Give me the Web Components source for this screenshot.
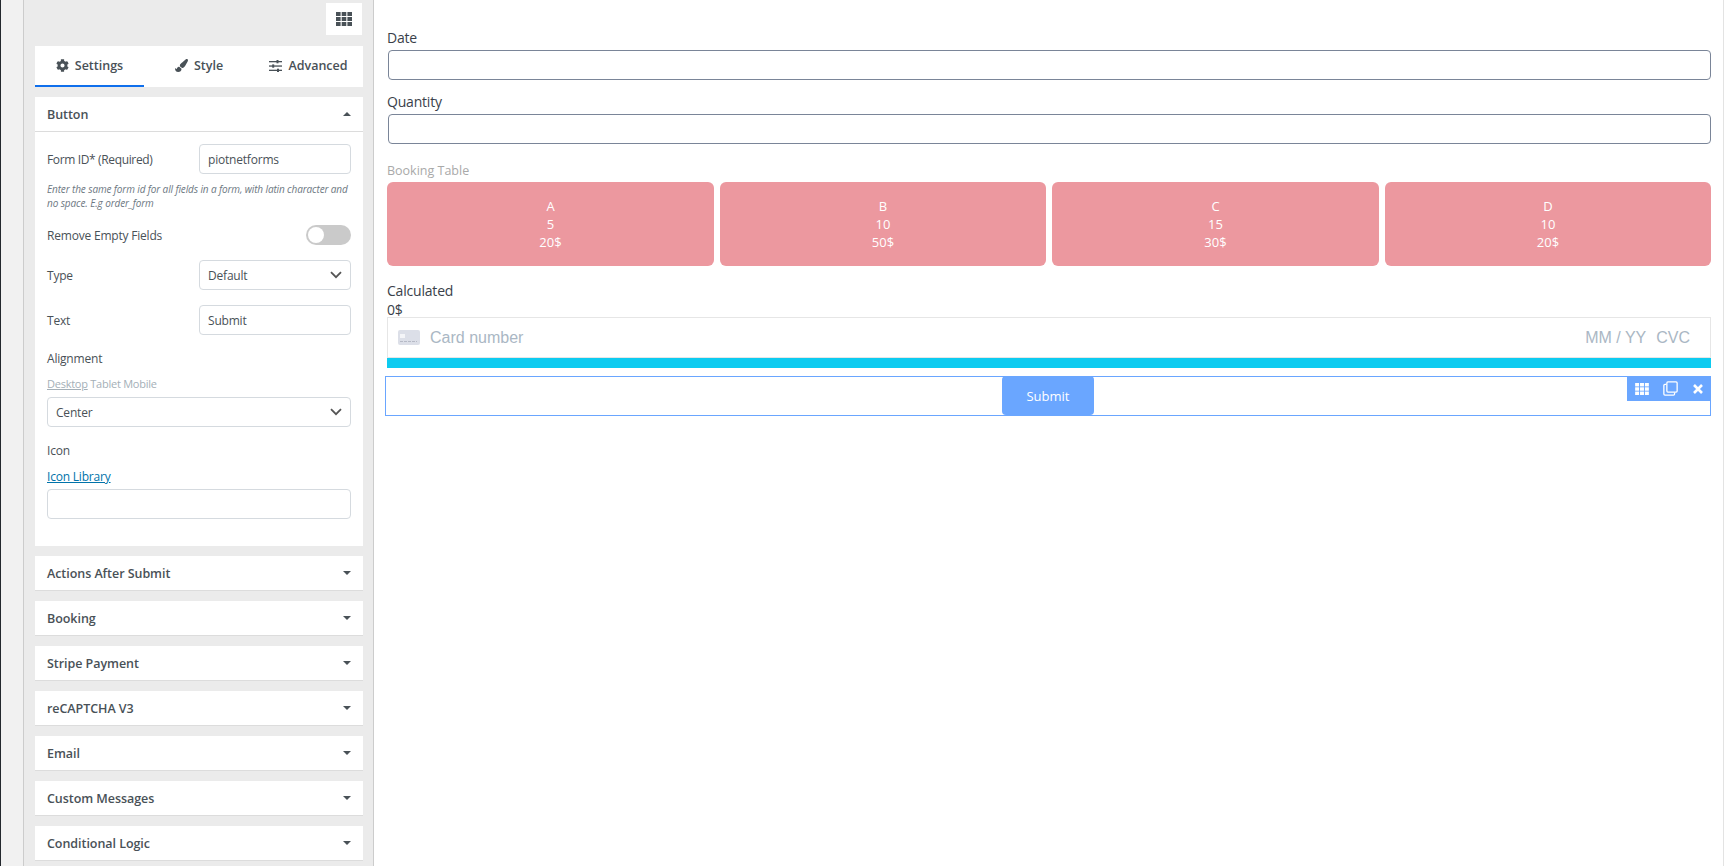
<!DOCTYPE html>
<html lang="en">
<head>
<meta charset="UTF-8">
<title>Piotnet Forms editor</title>
<style>
  html, body { margin: 0; height: 100%; overflow: hidden; }
  body { font-family: "Open Sans", "Liberation Sans", sans-serif; color: #495157; background: #fff; }
  .help { margin: 8px 0 0; font: italic 10px/14px "Open Sans", sans-serif; letter-spacing: -.12px; color: #6d7882; }
</style>
</head>
<body>
<editor-page>
  <editor-sidebar slot="side">
    <editor-tabs></editor-tabs>
    <editor-section title="Button" open>
      <editor-field label="Form ID* (Required)" value="piotnetforms" style="--label-spacing:-.36px"></editor-field>
      <p class="help">Enter the same form id for all fields in a form, with latin character and no space. E.g order_form</p>
      <editor-switch label="Remove Empty Fields"></editor-switch>
      <editor-field label="Type" value="Default" select style="margin-top:15px"></editor-field>
      <editor-field label="Text" value="Submit" style="margin-top:15px"></editor-field>
      <editor-wide label="Alignment" value="Center" select></editor-wide>
      <editor-wide label="Icon" link="Icon Library"></editor-wide>
    </editor-section>
    <editor-section title="Actions After Submit"></editor-section>
    <editor-section title="Booking"></editor-section>
    <editor-section title="Stripe Payment"></editor-section>
    <editor-section title="reCAPTCHA V3"></editor-section>
    <editor-section title="Email"></editor-section>
    <editor-section title="Custom Messages"></editor-section>
    <editor-section title="Conditional Logic"></editor-section>
  </editor-sidebar>
  <form-canvas slot="main">
    <form-input label="Date"></form-input>
    <form-input label="Quantity"></form-input>
    <booking-table>
      <booking-card>A<br>5<br>20$</booking-card>
      <booking-card>B<br>10<br>50$</booking-card>
      <booking-card>C<br>15<br>30$</booking-card>
      <booking-card>D<br>10<br>20$</booking-card>
    </booking-table>
    <calc-field></calc-field>
    <stripe-card></stripe-card>
    <submit-row></submit-row>
  </form-canvas>
</editor-page>

<script>
  const TH = `<svg viewBox="0 0 16 14" width="16" height="14" fill="currentColor">
    <rect x="0" y="0" width="4.6" height="4"/><rect x="5.7" y="0" width="4.6" height="4"/><rect x="11.4" y="0" width="4.6" height="4"/>
    <rect x="0" y="5" width="4.6" height="4"/><rect x="5.7" y="5" width="4.6" height="4"/><rect x="11.4" y="5" width="4.6" height="4"/>
    <rect x="0" y="10" width="4.6" height="4"/><rect x="5.7" y="10" width="4.6" height="4"/><rect x="11.4" y="10" width="4.6" height="4"/>
  </svg>`;
  const COG = `<svg viewBox="0 0 512 512" width="13" height="13" fill="currentColor"><path d="M487.4 315.7l-42.6-24.6c4.3-23.2 4.3-47 0-70.2l42.6-24.6c4.9-2.8 7.1-8.6 5.5-14-11.1-35.6-30-67.8-54.7-94.6-3.8-4.1-10-5.1-14.8-2.3L380.8 110c-17.9-15.4-38.5-27.3-60.8-35.1V25.8c0-5.6-3.9-10.5-9.4-11.7-36.7-8.2-74.3-7.8-109.2 0-5.5 1.2-9.4 6.1-9.4 11.7V75c-22.2 7.9-42.8 19.8-60.8 35.1L88.7 85.5c-4.9-2.8-11-1.9-14.8 2.3-24.7 26.7-43.6 58.9-54.7 94.6-1.7 5.4.6 11.2 5.5 14L67.3 221c-4.3 23.2-4.3 47 0 70.2l-42.6 24.6c-4.9 2.8-7.1 8.6-5.5 14 11.1 35.6 30 67.8 54.7 94.6 3.8 4.1 10 5.1 14.8 2.3l42.6-24.6c17.9 15.4 38.5 27.3 60.8 35.1v49.2c0 5.6 3.9 10.5 9.4 11.7 36.7 8.2 74.3 7.8 109.2 0 5.5-1.2 9.4-6.1 9.4-11.7v-49.2c22.2-7.9 42.8-19.8 60.8-35.1l42.6 24.6c4.9 2.8 11 1.9 14.8-2.3 24.7-26.7 43.6-58.9 54.7-94.6 1.5-5.5-.7-11.3-5.6-14.1zM256 336c-44.1 0-80-35.9-80-80s35.9-80 80-80 80 35.9 80 80-35.9 80-80 80z"/></svg>`;
  const BRUSH = `<svg viewBox="0 0 512 512" width="13" height="13" fill="currentColor"><path d="M167.02 309.34c-40.12 2.58-76.53 17.86-97.19 72.3-2.35 6.21-8 9.98-14.59 9.98-11.11 0-45.46-27.67-55.25-34.35C0 439.62 37.93 512 128 512c75.86 0 128-43.77 128-120.19 0-3.11-.65-6.08-.97-9.13l-88.01-73.34zM457.89 0c-15.16 0-29.37 6.71-40.21 16.45C213.27 199.05 192 203.34 192 257.09c0 13.7 3.25 26.76 8.73 38.7l63.82 53.18c7.21 1.8 14.64 3.03 22.39 3.03 62.11 0 98.11-45.47 211.16-256.46 7.38-14.35 13.9-29.85 13.9-45.99C512 20.64 486 0 457.89 0z"/></svg>`;
  const SLIDERS = `<svg viewBox="0 0 13 12" width="13" height="12" fill="currentColor">
    <rect x="0" y="1" width="13" height="1.3"/><rect x="7.5" y="0" width="2" height="3.3"/>
    <rect x="0" y="5.4" width="13" height="1.3"/><rect x="3.2" y="4.4" width="2" height="3.3"/>
    <rect x="0" y="9.7" width="13" height="1.3"/><rect x="8" y="8.7" width="2" height="3.3"/>
  </svg>`;
  const CHEVRON = `<svg viewBox="0 0 12 8" width="12" height="8" fill="none" stroke="#555" stroke-width="1.8"><path d="M1 1.2l5 5 5-5"/></svg>`;

  function define(name, css, html, init) {
    customElements.define(name, class extends HTMLElement {
      constructor() {
        super();
        this.attachShadow({ mode: 'open' });
      }
      connectedCallback() {
        const markup = typeof html === 'function' ? html(this) : html;
        this.shadowRoot.innerHTML = `<style>${css}</style>${markup}`;
        if (init) init(this);
      }
    });
  }

  define('editor-page', `
    :host { display: flex; height: 866px; }
    .strip { width: 22px; flex: none; background: #f1f1f1; border-left: 1px solid #23282d; border-right: 1px solid #ccc; }
    .main { flex: 1; min-width: 0; }
  `, `<div class="strip"></div><slot name="side"></slot><div class="main"><slot name="main"></slot></div>`);

  define('editor-sidebar', `
    :host { display: block; width: 350px; height: 866px; flex: none; box-sizing: border-box; background: #ebebeb; border-right: 1px solid #ccc; padding: 3px 10px 0 11px; overflow: hidden; letter-spacing: -.2px; }
    .top { display: flex; justify-content: flex-end; margin: 0 1px 11px 0; }
    .grid { width: 36px; height: 32px; background: #fff; color: #495157; display: flex; align-items: center; justify-content: center; }
  `, `<div class="top"><div class="grid">${TH}</div></div><slot></slot>`);

  define('editor-tabs', `
    :host { display: flex; height: 41px; background: #fff; margin-bottom: 10px; font-size: 12.5px; font-weight: 600; letter-spacing: 0; color: #495157; }
    .tab { display: flex; align-items: center; justify-content: center; gap: 6px; box-sizing: border-box; height: 41px; width: 109px; padding-bottom: 2px; }
    .active { padding-bottom: 0; border-bottom: 2px solid #0f6fec; }
    .mid { width: 110px; }
    svg { flex: none; }
  `, `<div class="tab active">${COG}<span>Settings</span></div><div class="tab mid">${BRUSH}<span>Style</span></div><div class="tab">${SLIDERS}<span>Advanced</span></div>`);

  define('editor-section', `
    :host { display: block; background: #fff; margin-bottom: 10px; border-bottom: 1px solid #dcdcdc; letter-spacing: -.05px; }
    :host([open]) { border-bottom: 0; }
    .head { display: flex; align-items: center; justify-content: space-between; height: 34px; padding: 0 12px; font-size: 12.5px; font-weight: 600; color: #495157; }
    :host([open]) .head { border-bottom: 1px solid #dcdcdc; }
    .caret { width: 0; height: 0; border-left: 4px solid transparent; border-right: 4px solid transparent; border-top: 4px solid #495157; }
    :host([open]) .caret { border-top: 0; border-bottom: 4px solid #495157; }
    .body { padding: 12px 12px 27px; letter-spacing: -.2px; }
  `, (el) => `<div class="head"><span>${el.getAttribute('title')}</span><i class="caret"></i></div>${el.hasAttribute('open') ? '<div class="body"><slot></slot></div>' : ''}`);

  const inputCss = `
    .input { box-sizing: border-box; height: 30px; background: #fff; border: 1px solid #d5dadf; border-radius: 4px; display: flex; align-items: center; justify-content: space-between; padding: 0 8px 0 8px; font-size: 12px; color: #495157; }
    svg { flex: none; }
  `;

  define('editor-field', `
    :host { display: flex; align-items: center; justify-content: space-between; font-size: 12px; color: #495157; }
    .input { width: 152px; }
    .lab { letter-spacing: var(--label-spacing, inherit); }
    ${inputCss}
  `, (el) => `<span class="lab">${el.getAttribute('label')}</span><div class="input"><span>${el.getAttribute('value')}</span>${el.hasAttribute('select') ? CHEVRON : ''}</div>`);

  define('editor-switch', `
    :host { display: flex; align-items: center; justify-content: space-between; margin-top: 15px; font-size: 12px; color: #495157; }
    .track { width: 45px; height: 20px; border-radius: 10px; background: #cacaca; position: relative; }
    .knob { position: absolute; left: 2px; top: 2px; width: 16px; height: 16px; border-radius: 50%; background: #fff; }
  `, (el) => `<span>${el.getAttribute('label')}</span><div class="track"><div class="knob"></div></div>`);

  define('editor-wide', `
    :host { display: block; font-size: 12px; color: #495157; margin-top: 15px; }
    .label { line-height: 17px; }
    .resp { margin: 9px 0 5px; line-height: 16px; font-size: 11px; letter-spacing: -.25px; color: #a4afb7; }
    .link { margin: 10px 0 4px; line-height: 16px; font-size: 12px; color: #0073aa; text-decoration: underline; }
    ${inputCss}
  `, (el) => `<div class="label">${el.getAttribute('label')}</div>
    ${el.hasAttribute('link') ? `<div class="link">${el.getAttribute('link')}</div>` : '<div class="resp"><u>Desktop</u> Tablet Mobile</div>'}
    <div class="input"><span>${el.getAttribute('value') || ''}</span>${el.hasAttribute('select') ? CHEVRON : ''}</div>`);

  define('form-canvas', `
    :host { display: block; padding: 28px 12px 0 13px; margin-right: 2px; height: 866px; box-sizing: border-box; border-right: 1px solid #e3e3e3; font-size: 14px; letter-spacing: -.2px; color: #3a3f4a; }
  `, `<slot></slot>`);

  define('form-input', `
    :host { display: block; margin-bottom: 12px; }
    .label { line-height: 20px; padding-bottom: 2px; }
    .box { box-sizing: border-box; height: 30px; margin: 0 0 0 1px; border: 1px solid #7a8598; border-radius: 4px; background: #fff; }
  `, (el) => `<div class="label">${el.getAttribute('label')}</div><div class="box"></div>`);

  define('booking-table', `
    :host { display: block; margin-top: 17px; }
    .title { font-size: 12.5px; line-height: 20px; padding-bottom: 1px; letter-spacing: 0; color: #a9a9a9; }
    .row { display: grid; grid-template-columns: 327px 326px 327px 326px; column-gap: 6px; }
  `, `<div class="title">Booking Table</div><div class="row"><slot></slot></div>`);

  define('booking-card', `
    :host { display: flex; align-items: center; justify-content: center; text-align: center; height: 84px; background: #ec989f; border-radius: 6px; color: #fff; font-size: 13px; letter-spacing: 0; line-height: 18px; }
  `, `<div><slot></slot></div>`);

  define('calc-field', `
    :host { display: block; margin-top: 15px; line-height: 19px; }
  `, `<div>Calculated</div><div>0$</div>`);

  define('stripe-card', `
    :host { display: block; margin-top: -2px; letter-spacing: 0; }
    .box { box-sizing: border-box; height: 41px; border: 1px solid #e6e6e6; display: flex; align-items: center; padding: 0 20px 0 10px; font-family: "Liberation Sans", Arial, sans-serif; font-size: 16px; color: #aab7c4; background: #fff; }
    svg { margin-right: 10px; flex: none; }
    .fill { flex: 1; }
    .bar { height: 10px; background: #0dcbf0; }
    .cvc { margin-left: 10px; }
  `, `<div class="box">
      <svg viewBox="0 0 22 15" width="22" height="15"><rect width="22" height="15" rx="2" fill="#dcdfe8"/><rect x="2" y="4" width="5" height="4" fill="#f4f5f8"/><path d="M2 11.5h17" stroke="#b6bac6" stroke-width="1" stroke-dasharray="3 1"/></svg>
      <span class="fill">Card number</span><span>MM / YY</span><span class="cvc">CVC</span>
    </div><div class="bar"></div>`);

  define('submit-row', `
    :host { display: flex; justify-content: center; position: relative; box-sizing: border-box; height: 40px; margin: 8px 0 0 -2px; border: 1px solid #6aa6ff; letter-spacing: 0; }
    button { width: 92px; height: 39px; margin: -1px 0 0; border: 0; border-radius: 4px; background: #6aa6ff; color: #fff; font: 13px "Open Sans", sans-serif; }
    .tools { position: absolute; right: -1px; top: -1px; width: 84px; height: 25px; background: #6aa6ff; color: #fff; display: flex; align-items: center; gap: 14px; padding: 0 0 0 8px; box-sizing: border-box; }
    .close { margin-left: 1px; }
  `, `<button>Submit</button>
    <div class="tools">
      ${TH.replace('width="16" height="14"', 'width="14" height="12"')}
      <svg viewBox="0 0 14 14" width="15" height="15" fill="none" stroke="currentColor" stroke-width="1.2"><rect x="3.6" y="0.8" width="9.6" height="9.6" rx="1"/><path d="M3.2 3.2H1.8a1 1 0 0 0-1 1v8a1 1 0 0 0 1 1h8a1 1 0 0 0 1-1v-1.4"/></svg>
      <svg class="close" viewBox="0 0 10 10" width="10" height="10" fill="none" stroke="currentColor" stroke-width="2.6"><path d="M1 1l8 8M9 1l-8 8"/></svg>
    </div>`);
</script>
</body>
</html>
